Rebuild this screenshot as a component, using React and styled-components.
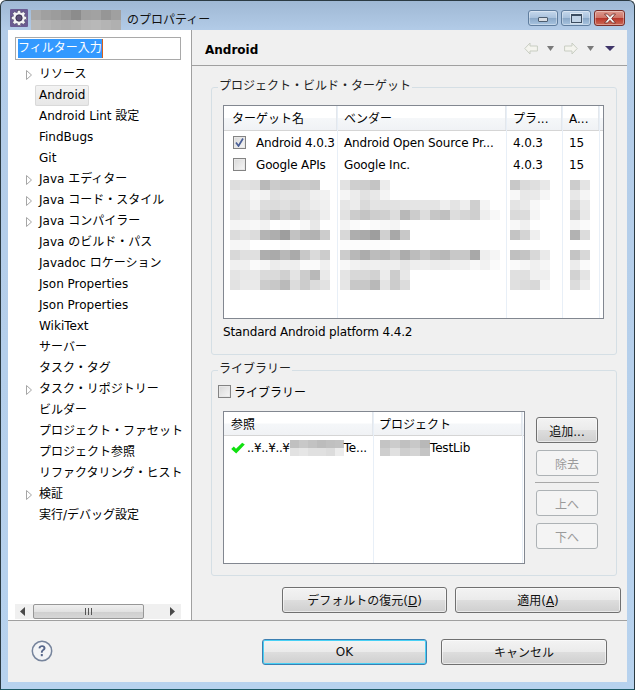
import React from 'react'
import styled, { createGlobalStyle, css } from 'styled-components'

const GlobalStyle = createGlobalStyle`
  html, body {
    margin: 0;
    padding: 0;
    background: #fff;
  }
  body {
    font-family: "DejaVu Sans", "Noto Sans CJK JP", sans-serif;
    font-size: 12px;
    color: #000;
  }
  * { box-sizing: border-box; }
`

const Window = styled.div`
  width: 635px;
  height: 690px;
  display: flex;
  flex-direction: column;
  overflow: hidden;
  border: 1px solid #2b3a42;
  border-bottom-color: #1d5a66;
  border-radius: 6px 6px 0 0;
  background: linear-gradient(180deg, #9fb8d4 0, #b3cce8 30px, #b7d2ee 100%);
`

const TitleBar = styled.div`
  height: 29px;
  flex: none;
  display: flex;
  align-items: center;
  padding: 5px 9px 0 9px;
`

const TitleBlur = styled.div`
  align-self: flex-end;
`

const TitleText = styled.span`
  margin-left: 6px;
  white-space: nowrap;
  color: #111;
`

const WinButtons = styled.div`
  margin-left: auto;
  display: flex;
  gap: 3px;
  align-self: flex-start;
  padding-top: 4px;
`

const WinButton = styled.div`
  width: 30px;
  height: 16px;
  display: flex;
  align-items: center;
  justify-content: center;
  border: 1px solid #5f7d9e;
  border-radius: 3px;
  background: linear-gradient(180deg, #c6d8ec 0, #a9c2dd 48%, #8aa8c8 52%, #a8c4e0 100%);
  box-shadow: inset 0 0 0 1px rgba(255, 255, 255, 0.35);
  ${p => p.$close && css`
    width: 31px;
    border-color: #7a2f2a;
    background: linear-gradient(180deg, #dd9a8e 0, #cf7568 48%, #b8362a 52%, #cb6a58 100%);
  `}
`

const MinGlyph = styled.span`
  width: 10px;
  height: 5px;
  margin-top: 3px;
  border: 1px solid #4c5d70;
  background: #d8dde3;
  border-radius: 1px;
`

const MaxGlyph = styled.span`
  width: 11px;
  height: 9px;
  border: 1px solid #3c4d60;
  border-top-width: 2px;
  background: #c2d4e7;
  box-shadow: 0 0 0 1px rgba(255, 255, 255, 0.5);
`

const Client = styled.div`
  flex: 1;
  min-height: 0;
  display: flex;
  flex-direction: column;
  margin: 0 7px 7px 7px;
  background: #f0f0f0;
`

const Main = styled.div`
  flex: 1;
  min-height: 0;
  display: flex;
`

const Sidebar = styled.div`
  width: 184px;
  flex: none;
  display: flex;
  flex-direction: column;
  padding: 7px 10px 1px 7px;
  background: #fff;
  border-right: 1px solid #a0a0a0;
`

const FilterBox = styled.div`
  width: 166px;
  height: 23px;
  flex: none;
  padding: 1px 2px;
  border: 1px solid #a9a9a9;
  background: #fff;
  display: flex;
`

const Selected = styled.span`
  display: block;
  height: 19px;
  line-height: 19px;
  background: #3399ff;
  color: #fff;
  border-right: 1px solid #d9621c;
`

const Tree = styled.div`
  flex: 1;
  min-height: 0;
  margin: 4px -9px 0 0;
  overflow: hidden;
`

const TreeRow = styled.div`
  height: 21px;
  display: flex;
  align-items: center;
  white-space: nowrap;
`

const Twisty = styled.span`
  width: 20px;
  flex: none;
  padding-left: 11px;
  display: flex;
`

const TreeLabel = styled.span`
  height: 21px;
  line-height: 20px;
  padding: 0 4px;
  border-radius: 2px;
  ${p => p.$selected && css`
    background: linear-gradient(180deg, #f4f4f4, #e6e6e6);
    box-shadow: inset 0 0 0 1px #d9d9d9;
  `}
`

const HScroll = styled.div`
  height: 15px;
  flex: none;
  display: flex;
  align-items: center;
  background: #f0f0f0;
`

const ScrollEnd = styled.span`
  width: 18px;
  flex: none;
  display: flex;
  justify-content: center;
  padding-right: ${p => (p.$start ? 3 : 0)}px;
`

const ScrollThumb = styled.div`
  width: 111px;
  height: 15px;
  display: flex;
  align-items: center;
  justify-content: center;
  gap: 2px;
  border: 1px solid #979797;
  border-radius: 2px;
  background: linear-gradient(180deg, #f0f0f0 0, #e2e2e2 50%, #cfcfcf 52%, #d6d6d6 100%);
`

const ThumbTick = styled.span`
  width: 1px;
  height: 7px;
  background: #555;
`

const ScrollFill = styled.span`
  flex: 1;
`

const Panel = styled.div`
  flex: 1;
  min-width: 0;
  display: flex;
  flex-direction: column;
`

const PanelHeader = styled.div`
  height: 36px;
  flex: none;
  display: flex;
  align-items: center;
  padding: 5px 12px 0 13px;
  border-bottom: 1px solid #a0a0a0;
`

const PanelTitle = styled.span`
  font-weight: 700;
`

const NavIcons = styled.div`
  margin: -3px 0 0 auto;
  display: flex;
  align-items: center;
`

const NavSpacer = styled.span`
  width: 10px;
`

const PanelBody = styled.div`
  flex: 1;
  min-height: 0;
  display: flex;
  flex-direction: column;
  padding: 13px 10px 6px 19px;
`

const Group = styled.fieldset`
  margin: 0;
  padding: 0 12px 0 11px;
  min-width: 0;
  flex: none;
  height: ${p => p.$height}px;
  border: 1px solid #d5dfe5;
  border-radius: 3px;
  & + & { margin-top: 7px; }
`

const Legend = styled.legend`
  margin-left: -5px;
  padding: 1px 1px 3px 1px;
  line-height: 12px;
  color: #222;
`

const ListBox = styled.div`
  display: flex;
  height: ${p => p.$height}px;
  margin-top: ${p => p.$top}px;
  width: ${p => p.$width}px;
  border: 1px solid #828790;
  background: #fff;
  overflow: hidden;
`

const Col = styled.div`
  width: ${p => p.$width}px;
  flex: none;
  display: flex;
  flex-direction: column;
  overflow: hidden;
  white-space: nowrap;
  border-right: 1px solid #e8eff7;
`

const ColFill = styled.div`
  flex: 1;
  display: flex;
  flex-direction: column;
`

const HeadCell = styled.div`
  height: ${p => p.$height || 25}px;
  flex: none;
  line-height: 26px;
  padding-left: ${p => p.$pad || 6}px;
  border-bottom: 1px solid #d5d5d5;
  box-shadow: inset -1px 0 0 #e3e7ec;
  background: linear-gradient(180deg, #fff 0, #fff 48%, #f5f7f9 52%, #f0f2f5 100%);
`

const Cell = styled.div`
  height: 22px;
  flex: none;
  display: flex;
  align-items: center;
  padding: 1px 0 0 ${p => p.$pad || 6}px;
  overflow: hidden;
  letter-spacing: -0.15px;
`

const PathText = styled.span`
  margin-left: 2px;
  letter-spacing: -0.35px;
`

const BlurBlock = styled.svg`
  display: block;
  flex: none;
`

const BlurArea = styled.div`
  margin-top: 5px;
  padding-left: ${p => p.$pad}px;
`

const CheckBox = styled.span`
  width: 13px;
  height: 13px;
  flex: none;
  display: flex;
  align-items: center;
  justify-content: center;
  border: 1px solid #838383;
  background: linear-gradient(135deg, #d8d8d8, #f7f7f7);
  box-shadow: inset 0 0 0 1px #e8e8e8;
  margin-right: ${p => p.$gap}px;
`

const StatusLine = styled.div`
  margin-top: 7px;
  line-height: 13px;
  letter-spacing: -0.15px;
`

const CheckRow = styled.div`
  display: flex;
  align-items: center;
  height: 14px;
  margin: 6px 0 0 -5px;
`

const LibRow = styled.div`
  display: flex;
  margin-top: 13px;
  gap: 10px;
`

const Side = styled.div`
  width: 64px;
  flex: none;
  display: flex;
  flex-direction: column;
  align-items: center;
  padding-top: 6px;
  gap: 7px;
`

const SideRule = styled.div`
  width: 64px;
  height: 1px;
  margin-top: -1px;
  background: #a8a8a8;
`

const Btn = styled.div`
  width: ${p => p.$width}px;
  height: 26px;
  flex: none;
  display: flex;
  align-items: center;
  justify-content: center;
  white-space: nowrap;
  border: 1px solid #707070;
  border-radius: 3px;
  color: #111;
  background: linear-gradient(180deg, #f3f3f3 0, #ebebeb 48%, #dddddd 52%, #cfcfcf 100%);
  box-shadow: inset 0 0 0 1px rgba(255, 255, 255, 0.55);
  ${p => p.$disabled && css`
    border-color: #adb2b5;
    background: #f4f4f4;
    color: #9a9a9a;
    box-shadow: none;
  `}
  ${p => p.$default && css`
    border-color: #3c7fb1;
    box-shadow: inset 0 0 0 1px #48d0f5;
  `}
`

const ButtonRow = styled.div`
  display: flex;
  justify-content: flex-end;
  gap: 8px;
  margin: 11px -4px 0 0;
`

const BtnText = styled.span`
  margin-top: -2px;
`

const Footer = styled.div`
  height: 62px;
  flex: none;
  display: flex;
  align-items: center;
  padding: 0 20px 0 23px;
  border-top: 1px solid #a0a0a0;
  gap: 14px;
`

const HelpWrap = styled.div`
  margin: -1px auto 0 0;
  display: flex;
`

// grey levels of the pixelated (censored) parts of the picture
const Mosaic = ({ rows, cellW = 10, cellH = 10 }) => {
  const width = Math.max(...rows.map(r => r.length)) * cellW
  return (
    <BlurBlock width={width} height={rows.length * cellH}>
      {rows.map((row, y) =>
        row.map((g, x) => (
          <rect key={x} x={x * cellW} y={y * cellH} width={cellW} height={cellH} fill={`#${g}${g}${g}`} />
        )),
      )}
    </BlurBlock>
  )
}

const blurName = [
  'dd e2 df b9 cb c6 c8 cd c8 ff',
  'ec ec f6 f2 e2 e6 e6 e4 ef f2',
  'e4 e6 f2 dd dc e0 d8 e6 ec f0',
  'e0 e6 e8 d4 c0 d2 c6 e0 e2 ee',
  'f4 f5 f8 f2 ff fa ff f8 e8 ff',
  'dc e2 dc b4 ae 9e c2 b4 b2 cc',
  'f6 f6 ff ff ff fa ff ff ff ff',
  'd8 e0 e0 ae aa b8 aa c8 da cc',
  'f0 f0 fa f6 ec f0 ee fa fa f0',
  'e4 e8 e8 da da d0 e4 cc b8 ea',
  'e2 ea ea cc c8 ba dc cc dc e2',
].map(r => r.split(' '))

const blurVendor = [
  'e2 cf cd c4 ec ff ff ff ff ff ff ff ff ff ff ff',
  'f5 ec e2 e8 f4 ff ff ff ff ff ff ff ff ff ff ff',
  'e6 ec da e4 e2 e2 e4 e5 e5 e4 ee e4 ee cf f4 ff',
  'e2 cc c4 ce d0 dd b8 cc dd c6 c0 dd d6 cf ee f8',
  'f4 fa ff fa f8 f4 ff ff ff ff ff ff ff ff ff ff',
  'd8 ae aa 9e d0 a8 c8 ff ff ff ff ff ff ff ff ff',
  'fc fc fc fc fc ff ff ff ff ff ff ff ff ff ff ff',
  'cc b8 ac bc b8 c4 ac bc c8 bc b8 c8 c8 a8 ee f5',
  'f8 f2 ee f0 ee ee e6 ee f0 ec ec f0 f0 f8 f2 fa',
  'e4 d8 d8 d2 ec cc e8 ff ff ff ff ff ff ff ff ff',
  'e6 c8 c8 b8 e4 cc dc ff ff ff ff ff ff ff ff ff',
].map(r => r.split(' '))

const blurApi = [
  'c8 da df e8',
  'f8 e8 ea f6',
  'e4 ea f8 ff',
  'da dc f5 ff',
  'f8 f0 ff ff',
  'c4 d4 ef ff',
  'ff ff ff ff',
  'c0 c4 d8 ea',
  'fa f6 f0 f6',
  'e0 e0 f0 ee',
  'e0 dc d8 f5',
].map(r => r.split(' '))

const blurLevel = [
  'cc e4', 'e8 f5', 'd8 ea', 'cc e8', 'f4 fa', 'b2 dc', 'ff ff', 'c4 d8', 'ec fa', 'd2 e4', 'dc ec',
].map(r => r.split(' '))

const blurTitle = [
  'a8 a0 9c 96 8c a0 a2 96 a0',
  'b8 b4 b0 ae b0 b6 b8 b4 b0',
].map(r => r.split(' '))

const blurRefPath = [
  'c0 c8 c2 bc c0 c2',
  'e2 e6 e0 e0 dc ec',
].map(r => r.split(' '))

const blurProject = [
  'c4 cc c0 c8 b8',
  'ce e0 ce d4 c4',
].map(r => r.split(' '))

const treeItems = [
  ['リソース', true],
  ['Android', false, true],
  ['Android Lint 設定'],
  ['FindBugs'],
  ['Git'],
  ['Java エディター', true],
  ['Java コード・スタイル', true],
  ['Java コンパイラー', true],
  ['Java のビルド・パス'],
  ['Javadoc ロケーション'],
  ['Json Properties'],
  ['Json Properties'],
  ['WikiText'],
  ['サーバー'],
  ['タスク・タグ'],
  ['タスク・リポジトリー', true],
  ['ビルダー'],
  ['プロジェクト・ファセット'],
  ['プロジェクト参照'],
  ['リファクタリング・ヒスト'],
  ['検証', true],
  ['実行/デバッグ設定'],
]

const gearTeeth = [0, 45, 90, 135, 180, 225, 270, 315]

const GearIcon = () => (
  <svg width="21" height="18" viewBox="0 0 21 18">
    <rect x="0" y="0" width="18" height="18" rx="1" fill="#6b5b92" />
    {gearTeeth.map(a => (
      <rect key={a} x="7.300" y="1.400" width="3.400" height="3.400" fill="#f2f2f2" stroke="#3a3450" strokeWidth="0.500" transform={`rotate(${a} 9 9)`} />
    ))}
    <circle cx="9" cy="9" r="4.600" fill="none" stroke="#f4f4f4" strokeWidth="2.400" />
    <circle cx="9" cy="9" r="3.100" fill="#5d5078" stroke="#2e2a3c" strokeWidth="0.700" />
  </svg>
)

const CloseGlyph = () => (
  <svg width="14" height="11" viewBox="0 0 14 11">
    <path d="M1.500 1h3l2.500 2.600L9.500 1h3L8.700 5.500l3.800 4.500h-3L7 7.300 4.500 10h-3l3.800-4.500z" fill="#f2f2f2" stroke="#6e2a24" strokeWidth="0.800" />
  </svg>
)

const TreeArrow = () => (
  <svg width="6" height="10" viewBox="0 0 6 10">
    <path d="M0.500 0.500L5.500 5 0.500 9.500z" fill="#fff" stroke="#a6a6a6" />
  </svg>
)

const NavArrow = ({ flip }) => (
  <svg width="14" height="13" viewBox="0 0 14 13" style={flip ? { transform: 'scaleX(-1)' } : undefined}>
    <path d="M0.800 6.500L6 1v3h7.400v5H6v3z" fill="#f4f4ee" stroke="#c8cdc2" />
  </svg>
)

const NavDrop = ({ color = '#7a7a7a', w = 7, gap = 9 }) => (
  <svg width={w} height="5" viewBox={`0 0 ${w} 5`} style={{ marginLeft: gap }}>
    <path d={`M0 0h${w}L${w / 2} 5z`} fill={color} />
  </svg>
)

const TickIcon = () => (
  <svg width="14" height="12" viewBox="0 0 14 12">
    <path d="M0.200 7L2.800 4.600 5 6.800 11.200 0.800l2.600 1.600L5.200 11.500z" fill="#10e010" />
  </svg>
)

const BoxTick = () => (
  <svg width="9" height="9" viewBox="0 0 9 9">
    <path d="M1 4.500L3.500 8 8 0.500" fill="none" stroke="#4a5f97" strokeWidth="1.700" />
  </svg>
)

const HelpIcon = () => (
  <svg width="22" height="22" viewBox="0 0 22 22">
    <circle cx="11" cy="11" r="9.700" fill="#f3f4f6" stroke="#76849c" strokeWidth="1.500" />
    <path d="M7.500 8.200c.3-2 1.800-2.900 3.600-2.900 2 0 3.400 1.100 3.400 2.800 0 2.400-2.800 2.500-2.800 4.600H9.900c0-3 2.600-3 2.600-4.600 0-.7-.6-1.200-1.500-1.200-.9 0-1.500.5-1.700 1.500z" fill="#56668a" />
    <rect x="9.800" y="14" width="2" height="2.200" fill="#56668a" />
  </svg>
)

const ScrollArrow = ({ flip }) => (
  <svg width="5" height="9" viewBox="0 0 5 9" style={flip ? { transform: 'scaleX(-1)' } : undefined}>
    <path d="M5 0v9L0 4.500z" fill="#4a4a4a" />
  </svg>
)

const App = () => (
  <>
    <GlobalStyle />
    <Window>
      <TitleBar>
        <GearIcon />
        <TitleBlur><Mosaic rows={blurTitle} /></TitleBlur>
        <TitleText>のプロパティー</TitleText>
        <WinButtons>
          <WinButton><MinGlyph /></WinButton>
          <WinButton><MaxGlyph /></WinButton>
          <WinButton $close><CloseGlyph /></WinButton>
        </WinButtons>
      </TitleBar>
      <Client>
        <Main>
          <Sidebar>
            <FilterBox><Selected>フィルター入力</Selected></FilterBox>
            <Tree>
              {treeItems.map(([label, arrow, selected], i) => (
                <TreeRow key={i}>
                  <Twisty>{arrow && <TreeArrow />}</Twisty>
                  <TreeLabel $selected={selected}>{label}</TreeLabel>
                </TreeRow>
              ))}
            </Tree>
            <HScroll>
              <ScrollEnd $start><ScrollArrow /></ScrollEnd>
              <ScrollThumb><ThumbTick /><ThumbTick /><ThumbTick /></ScrollThumb>
              <ScrollFill />
              <ScrollEnd><ScrollArrow flip /></ScrollEnd>
            </HScroll>
          </Sidebar>
          <Panel>
            <PanelHeader>
              <PanelTitle>Android</PanelTitle>
              <NavIcons>
                <NavArrow />
                <NavDrop />
                <NavSpacer />
                <NavArrow flip />
                <NavDrop />
                <NavDrop color="#3f3569" w={10} gap={11} />
              </NavIcons>
            </PanelHeader>
            <PanelBody>
              <Group $height={276}>
                <Legend>プロジェクト・ビルド・ターゲット</Legend>
                <ListBox $height={214} $top={10} $width={381}>
                  <Col $width={114}>
                    <HeadCell $pad={8}>ターゲット名</HeadCell>
                    <Cell $pad={9}><CheckBox $gap={10}><BoxTick /></CheckBox>Android 4.0.3</Cell>
                    <Cell $pad={9}><CheckBox $gap={10} />Google APIs</Cell>
                    <BlurArea $pad={6}><Mosaic rows={blurName} /></BlurArea>
                  </Col>
                  <Col $width={169}>
                    <HeadCell>ベンダー</HeadCell>
                    <Cell>Android Open Source Pr...</Cell>
                    <Cell>Google Inc.</Cell>
                    <BlurArea $pad={2}><Mosaic rows={blurVendor} /></BlurArea>
                  </Col>
                  <Col $width={56}>
                    <HeadCell>プラ...</HeadCell>
                    <Cell>4.0.3</Cell>
                    <Cell>4.0.3</Cell>
                    <BlurArea $pad={3}><Mosaic rows={blurApi} /></BlurArea>
                  </Col>
                  <Col $width={37}>
                    <HeadCell>A...</HeadCell>
                    <Cell>15</Cell>
                    <Cell>15</Cell>
                    <BlurArea $pad={7}><Mosaic rows={blurLevel} /></BlurArea>
                  </Col>
                  <ColFill><HeadCell /></ColFill>
                </ListBox>
                <StatusLine>Standard Android platform 4.4.2</StatusLine>
              </Group>
              <Group $height={214}>
                <Legend>ライブラリー</Legend>
                <CheckRow><CheckBox $gap={3} />ライブラリー</CheckRow>
                <LibRow>
                  <ListBox $height={153} $top={0} $width={302}>
                    <Col $width={150}>
                      <HeadCell $pad={7} $height={24}>参照</HeadCell>
                      <Cell $pad={7}>
                        <TickIcon />
                        <PathText>..¥..¥..¥</PathText>
                        <Mosaic rows={blurRefPath} cellW={9} cellH={8} />
                        Te...
                      </Cell>
                    </Col>
                    <Col $width={149}>
                      <HeadCell $pad={5} $height={24}>プロジェクト</HeadCell>
                      <Cell $pad={6}><Mosaic rows={blurProject} cellH={8} />TestLib</Cell>
                    </Col>
                    <ColFill><HeadCell $height={24} /></ColFill>
                  </ListBox>
                  <Side>
                    <Btn $width={62}>追加...</Btn>
                    <Btn $width={62} $disabled>除去</Btn>
                    <SideRule />
                    <Btn $width={62} $disabled>上へ</Btn>
                    <Btn $width={62} $disabled>下へ</Btn>
                  </Side>
                </LibRow>
              </Group>
              <ButtonRow>
                <Btn $width={165}><BtnText>デフォルトの復元(<u>D</u>)</BtnText></Btn>
                <Btn $width={166}><BtnText>適用(<u>A</u>)</BtnText></Btn>
              </ButtonRow>
            </PanelBody>
          </Panel>
        </Main>
        <Footer>
          <HelpWrap><HelpIcon /></HelpWrap>
          <Btn $width={165} $default>OK</Btn>
          <Btn $width={166}>キャンセル</Btn>
        </Footer>
      </Client>
    </Window>
  </>
)

export default App
